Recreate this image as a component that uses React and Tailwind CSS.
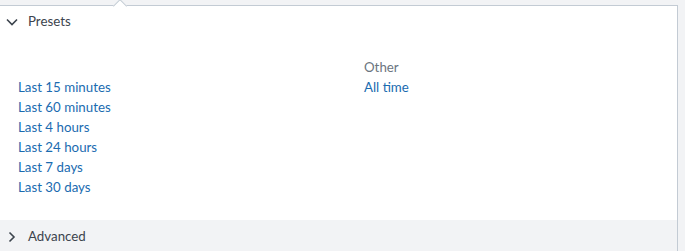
import React from 'react';

const presets = ['Last 15 minutes', 'Last 60 minutes', 'Last 4 hours', 'Last 24 hours', 'Last 7 days', 'Last 30 days'];

function ChevronDown() {
    return (
        <svg width="12" height="8" viewBox="0 0 12 8">
            <path d="M1 1.5 L6 6.5 L11 1.5" fill="none" stroke="#3c444d" strokeWidth="1.6" />
        </svg>
    );
}

function ChevronRight() {
    return (
        <svg width="12" height="12" viewBox="0 0 12 12">
            <path d="M3.5 1.5 L8 6 L3.5 10.5" fill="none" stroke="#3c444d" strokeWidth="1.6" />
        </svg>
    );
}

export default function App() {
    return (
        <div className="w-[685px] h-[251px] bg-[#f2f3f5] overflow-hidden" style={{ fontFamily: 'Lato, sans-serif' }}>
            <div className="relative mt-[5px] w-[678px] h-[246px] bg-white border-t border-r border-[#c3cbd4] flex flex-col">
                {/* caret */}
                <div className="absolute -top-[7px] left-[113px] w-[14px] h-[8px] overflow-hidden">
                    <div className="absolute top-[2px] left-[2px] w-[10px] h-[10px] bg-white border-t border-l border-[#c3cbd4] rotate-45" />
                </div>
                <div className="flex items-center h-[32px] pl-[6px] gap-[10px] text-[13.3px] text-[#3c444d]">
                    <ChevronDown />
                    <span>Presets</span>
                </div>
                <div className="flex flex-1 pt-[19px] text-[13.3px] leading-[20px]">
                    <div className="w-[364px] pl-[18px] flex flex-col">
                        <div className="h-[20px]" />
                        {presets.map((p) => (
                            <a key={p} className="text-[#1a6bb0]">{p}</a>
                        ))}
                    </div>
                    <div className="flex flex-col">
                        <div className="text-[#6b7580]">Other</div>
                        <a className="text-[#1a6bb0]">All time</a>
                    </div>
                </div>
                <div className="flex items-center h-[31px] pt-[2px] bg-[#f2f3f5] pl-[6px] gap-[10px] text-[13.3px] text-[#3c444d]">
                    <ChevronRight />
                    <span>Advanced</span>
                </div>
            </div>
        </div>
    );
}
